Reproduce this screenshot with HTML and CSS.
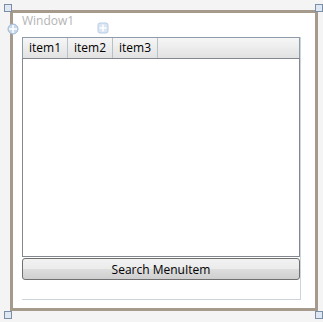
FILE: index.html
```html
<!DOCTYPE html>
<html lang="en">
<head>
    <meta charset="UTF-8">
    <title>Window1</title>
    <link rel="stylesheet" href="styles.css">
</head>
<body>
    <div class="stage">
        <div class="frame">
            <div class="title">Window1</div>
            <div class="panel">
                <ul class="menu">
                    <li>item1</li>
                    <li>item2</li>
                    <li>item3</li>
                    <li class="filler"></li>
                </ul>
                <div class="list"></div>
                <button class="search">Search MenuItem</button>
            </div>
        </div>
        <!-- designer adorners -->
        <span class="handle h-tl"></span>
        <span class="handle h-tr"></span>
        <span class="handle h-bl"></span>
        <span class="handle h-br"></span>
        <svg class="move m-left" width="12" height="12" viewBox="0 0 12 12">
            <circle cx="6" cy="6" r="5" fill="#c9d9ec" stroke="#9fb8d6"/>
            <path d="M6 2v8M2 6h8" stroke="#fff" stroke-width="1.5"/>
        </svg>
        <svg class="move m-mid" width="12" height="12" viewBox="0 0 12 12">
            <rect x="1" y="1" width="10" height="10" rx="2" fill="#dbe6f3" stroke="#b9cde4"/>
            <path d="M6 2.5v7M2.5 6h7" stroke="#fff" stroke-width="1.5"/>
        </svg>
    </div>
</body>
</html>
```

FILE: styles.css
```css
body {
    margin: 0;
    background: #f4f4f4;
    font-family: "Open Sans", "Noto Sans", sans-serif;
}
.stage {
    position: relative;
    width: 323px;
    height: 322px;
    padding: 10px 0 0 10px;
    box-sizing: border-box;
}
.frame {
    width: 308px;
    height: 301px;
    box-sizing: border-box;
    border: 3px solid #a69a8c;
    background: #fff;
    padding: 0 0 0 9px;
    display: flex;
    flex-direction: column;
}
.title {
    height: 24px;
    font-size: 12px;
    line-height: 14px;
    color: #b4b4b4;
    padding-top: 1px;
    box-sizing: border-box;
}
.panel {
    width: 279px;
    height: 263px;
    box-sizing: border-box;
    border-right: 1px solid #ccd4dc;
    border-bottom: 1px solid #ccd4dc;
    display: flex;
    flex-direction: column;
}
.menu {
    list-style: none;
    margin: 0;
    padding: 0;
    display: flex;
    height: 21px;
    box-sizing: border-box;
    border: 1px solid #8d9bab;
    border-bottom: none;
    background: linear-gradient(#f6f6f6, #e3e2e2);
}
.menu li {
    width: 45px;
    box-sizing: border-box;
    border-right: 1px solid #b8c0c8;
    font-size: 12px;
    line-height: 20px;
    color: #000;
    text-align: center;
}
.menu li.filler {
    flex: 1;
    border-right: none;
}
.list {
    height: 199px;
    box-sizing: border-box;
    border: 1px solid #828790;
    background: #fff;
}
.search {
    margin-top: 1px;
    height: 22px;
    box-sizing: border-box;
    border: 1px solid #707070;
    border-radius: 3px;
    background: linear-gradient(#f2f2f2 0%, #ebebeb 50%, #dddddd 51%, #cfcfcf 100%);
    font-family: "Open Sans", "Noto Sans", sans-serif;
    font-size: 12px;
    color: #000;
    padding: 0;
}
.handle {
    position: absolute;
    width: 6px;
    height: 6px;
    border: 1px solid #7a8ea6;
    background: #dfe8f2;
}
.h-tl { left: 4px; top: 4px; }
.h-tr { left: 315px; top: 4px; }
.h-bl { left: 4px; top: 311px; }
.h-br { left: 315px; top: 311px; }
.move {
    position: absolute;
}
.m-left { left: 7px; top: 23px; }
.m-mid { left: 97px; top: 22px; }
```
